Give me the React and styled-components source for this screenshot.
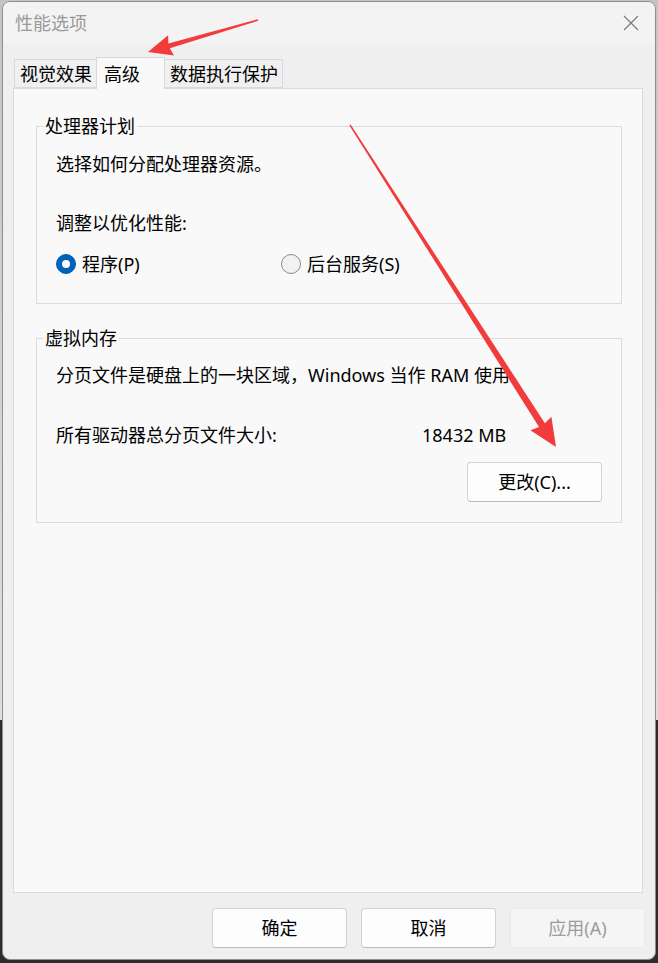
import React, { useState } from 'react';
import styled, { createGlobalStyle } from 'styled-components';

const GlobalStyle = createGlobalStyle`
  html, body {
    margin: 0;
    padding: 0;
  }
  body {
    font-family: "Noto Sans", "Noto Sans CJK SC", sans-serif;
  }
`;

const Desktop = styled.div`
  position: relative;
  width: 658px;
  height: 963px;
  overflow: hidden;
  background: linear-gradient(to bottom, #c4c4c4 0, #dedede 720px, #2c2c2c 720px, #2c2c2c 100%);
`;

const Window = styled.div`
  box-sizing: border-box;
  margin: 1px 0 0 2px;
  width: 654px;
  height: 959px;
  border: 1px solid #8e8e8e;
  border-radius: 8px;
  overflow: hidden;
  display: flex;
  flex-direction: column;
  background: #efefef;
  color: #000;
  font-size: 18px;
`;

const TitleBar = styled.div`
  height: 42px;
  flex-shrink: 0;
  display: flex;
  align-items: center;
  justify-content: space-between;
  padding: 0 16px 0 12px;
  background: #f3f3f3;
`;

const Title = styled.span`
  color: #9a9a9a;
  font-size: 18px;
  line-height: 24px;
`;

const CloseButton = styled.span`
  display: flex;
  width: 16px;
  height: 16px;
  color: #7a7a7a;
`;

const Body = styled.div`
  flex: 1;
  display: flex;
  flex-direction: column;
  padding: 13px 12px 11px 10px;
  min-height: 0;
`;

const TabRow = styled.div`
  display: flex;
  align-items: flex-end;
  height: 31px;
  padding-left: 1px;
  position: relative;
  z-index: 1;
`;

const Tab = styled.div`
  box-sizing: border-box;
  height: ${(p) => (p.$active ? '32px' : '29px')};
  margin-bottom: ${(p) => (p.$active ? '-1px' : '0')};
  padding: ${(p) => (p.$active ? '0 24px 0 7px' : '0 4px 0 5px')};
  display: flex;
  align-items: center;
  border: 1px solid #d9d9d9;
  border-bottom: ${(p) => (p.$active ? 'none' : '1px solid #d9d9d9')};
  border-left: ${(p) => (p.$first || p.$active ? '1px solid #d9d9d9' : 'none')};
  border-right: ${(p) => (p.$beforeActive ? 'none' : '1px solid #d9d9d9')};
  background: ${(p) => (p.$active ? '#f9f9f9' : '#f0f0f0')};
  line-height: 24px;
  white-space: nowrap;
  cursor: default;
`;

const Panel = styled.div`
  flex: 1;
  box-sizing: border-box;
  border: 1px solid #dadada;
  background: #f9f9f9;
  padding: 25px 20px 0 22px;
  display: flex;
  flex-direction: column;
  gap: 22px;
`;

const Group = styled.fieldset`
  margin: 0;
  padding: 0;
  border: 1px solid #dcdcdc;
  min-width: 0;
`;

const Legend = styled.legend`
  margin-left: 6px;
  padding: 0 2px;
  font-size: 18px;
  line-height: 24px;
`;

const GroupContent = styled.div`
  display: flex;
  flex-direction: column;
  padding: ${(p) => p.$pad};
`;

const Text = styled.div`
  line-height: 24px;
  margin-top: ${(p) => p.$mt || 0};
  white-space: nowrap;
`;

const RadioRow = styled.div`
  display: flex;
  align-items: center;
  margin-top: 17px;
  height: 24px;
`;

const RadioOption = styled.label`
  display: flex;
  align-items: center;
  gap: 6px;
  width: ${(p) => p.$w || 'auto'};
  line-height: 24px;
  cursor: default;
`;

const RadioDot = styled.span`
  box-sizing: border-box;
  width: 20px;
  height: 20px;
  border-radius: 50%;
  flex-shrink: 0;
  display: flex;
  align-items: center;
  justify-content: center;
  background: ${(p) => (p.$checked ? '#0062b8' : '#f2f2f2')};
  border: 1px solid ${(p) => (p.$checked ? '#0062b8' : '#8a8a8a')};

  &::after {
    content: '';
    display: ${(p) => (p.$checked ? 'block' : 'none')};
    width: 8px;
    height: 8px;
    border-radius: 50%;
    background: #fff;
  }
`;

const SizeRow = styled.div`
  display: grid;
  grid-template-columns: 366px auto;
  line-height: 24px;
  margin-top: 36px;
`;

const ButtonLine = styled.div`
  display: flex;
  justify-content: flex-end;
  margin-top: 15px;
`;

const Button = styled.button`
  box-sizing: border-box;
  width: 135px;
  height: 40px;
  border-radius: 4px;
  border: 1px solid ${(p) => (p.disabled ? '#ebebeb' : '#d2d2d2')};
  border-bottom-color: ${(p) => (p.disabled ? '#ebebeb' : '#bcbcbc')};
  background: ${(p) => (p.disabled ? '#f5f5f5' : '#fdfdfd')};
  color: ${(p) => (p.disabled ? '#9c9c9c' : '#000')};
  font-family: inherit;
  font-size: 18px;
  line-height: 24px;
  padding: 0;
  cursor: default;
`;

const Footer = styled.div`
  display: flex;
  justify-content: flex-end;
  gap: 14px;
  margin: 15px -2px 0 0;
  height: 40px;
`;

const Overlay = styled.svg`
  position: absolute;
  left: 0;
  top: 0;
  pointer-events: none;
`;

// tapered annotation arrow, tail -> tip
function arrowPoints([tx, ty], [px, py], headLen, headW, tailW, neckW) {
  const dx = px - tx;
  const dy = py - ty;
  const len = Math.hypot(dx, dy);
  const ux = dx / len;
  const uy = dy / len;
  const nx = -uy;
  const ny = ux;
  const bx = px - ux * headLen;
  const by = py - uy * headLen;
  const pts = [
    [tx + nx * tailW / 2, ty + ny * tailW / 2],
    [bx + nx * neckW / 2, by + ny * neckW / 2],
    [bx + nx * headW / 2 - ux * 2, by + ny * headW / 2 - uy * 2],
    [px, py],
    [bx - nx * headW / 2 - ux * 2, by - ny * headW / 2 - uy * 2],
    [bx - nx * neckW / 2, by - ny * neckW / 2],
    [tx - nx * tailW / 2, ty - ny * tailW / 2],
  ];
  return pts.map((p) => p.map((v) => v.toFixed(1)).join(',')).join(' ');
}

const tabs = ['视觉效果', '高级', '数据执行保护'];

export default function App() {
  const [tab, setTab] = useState(1);
  const [mode, setMode] = useState('program');

  return (
    <Desktop>
      <GlobalStyle />
      <Window>
        <TitleBar>
          <Title>性能选项</Title>
          <CloseButton>
            <svg width="16" height="16" viewBox="0 0 16 16">
              <path d="M1 1 L15 15 M15 1 L1 15" stroke="currentColor" strokeWidth="1.2" fill="none" />
            </svg>
          </CloseButton>
        </TitleBar>
        <Body>
          <TabRow>
            {tabs.map((t, i) => (
              <Tab
                key={t}
                $active={i === tab}
                $first={i === 0}
                $beforeActive={i === tab - 1}
                onClick={() => setTab(i)}
              >
                {t}
              </Tab>
            ))}
          </TabRow>
          <Panel>
            <Group>
              <Legend>处理器计划</Legend>
              <GroupContent $pad="14px 20px 27px 19px">
                <Text>选择如何分配处理器资源。</Text>
                <Text $mt="35px">调整以优化性能:</Text>
                <RadioRow>
                  <RadioOption $w="225px" onClick={() => setMode('program')}>
                    <RadioDot $checked={mode === 'program'} />
                    程序(P)
                  </RadioOption>
                  <RadioOption onClick={() => setMode('service')}>
                    <RadioDot $checked={mode === 'service'} />
                    后台服务(S)
                  </RadioOption>
                </RadioRow>
              </GroupContent>
            </Group>
            <Group>
              <Legend>虚拟内存</Legend>
              <GroupContent $pad="13px 19px 20px 19px">
                <Text>分页文件是硬盘上的一块区域，Windows 当作 RAM 使用。</Text>
                <SizeRow>
                  <span>所有驱动器总分页文件大小:</span>
                  <span>18432 MB</span>
                </SizeRow>
                <ButtonLine>
                  <Button>更改(C)...</Button>
                </ButtonLine>
              </GroupContent>
            </Group>
          </Panel>
          <Footer>
            <Button>确定</Button>
            <Button>取消</Button>
            <Button disabled>应用(A)</Button>
          </Footer>
        </Body>
      </Window>
      <Overlay width="658" height="963" viewBox="0 0 658 963">
        <polygon points={arrowPoints([258, 20], [148, 52], 22, 21, 1.5, 5)} fill="#f23c3c" />
        <polygon points={arrowPoints([350, 125], [556, 447], 26, 25, 1.5, 7)} fill="#f23c3c" />
      </Overlay>
    </Desktop>
  );
}
